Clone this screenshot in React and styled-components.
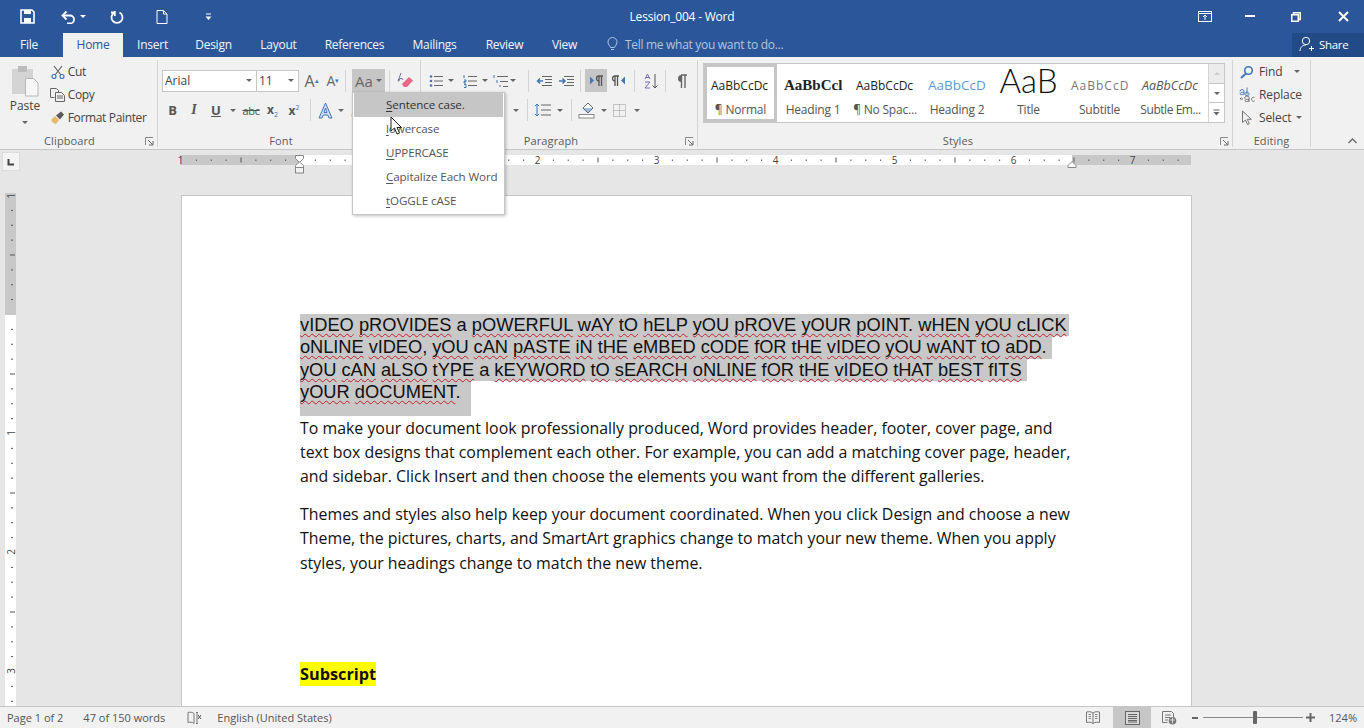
import React from "react";
import styled, { createGlobalStyle } from "styled-components";

const Global = createGlobalStyle`
  html, body { margin: 0; padding: 0; height: 100%; overflow: hidden; background: #e6e6e6; }
  #root { height: 100%; }
  * { box-sizing: border-box; }
`;
const UI = `"Open Sans", "Noto Sans", sans-serif`;

const Shell = styled.div`
  position: relative; width: 1364px; height: 728px; display: flex; flex-direction: column;
  overflow: hidden; font-family: ${UI}; color: #444;
`;
const TitleBar = styled.header`
  height: 33px; background: #2b579a; display: grid; grid-template-columns: 1fr auto 1fr; align-items: center; color: #fff;
`;
const Quick = styled.div`display: flex; align-items: center; padding-left: 18px;`;
const QuickBtn = styled.span`
  display: flex; justify-content: center; align-items: center; width: ${p => p.$w}px; margin-left: ${p => p.$ml || 0}px; height: 28px;
`;
const DocTitle = styled.div`font-size: 12px; letter-spacing: -0.2px;`;
const WinCtl = styled.div`display: flex; justify-content: flex-end; align-items: center;`;
const WinBtn = styled.span`display: flex; justify-content: center; align-items: center; width: ${p => p.$w}px; height: 28px;`;

const TabBar = styled.nav`height: 24px; background: #2b579a; display: flex; align-items: stretch; color: #f2f5fa; font-size: 12px;`;
const Tab = styled.span`
  display: flex; align-items: center; justify-content: center; width: ${p => p.$w}px;
  background: ${p => (p.$on ? "#f1f1f1" : "transparent")}; color: ${p => (p.$on ? "#2b579a" : "inherit")};
  letter-spacing: -0.25px; padding: 0 ${p => p.$pr || 0}px 2px 0;
`;
const TellMe = styled.span`display: flex; align-items: center; gap: 7px; margin-left: 15px; padding-bottom: 2px; color: #b3c4df; font-size: 12px; letter-spacing: -0.3px;`;
const Share = styled.span`
  margin-left: auto; width: 72px; background: #224a87; display: flex; align-items: center; gap: 4px; padding: 0 0 2px 7px; color: #fff; letter-spacing: -0.3px; font-size: 11.5px;
`;

const Ribbon = styled.section`height: 93px; background: #f1f1f1; display: flex; border-bottom: 1px solid #c6c6c6;`;
const Group = styled.div`
  width: ${p => p.$w}px; flex: none; display: flex; flex-direction: column; position: relative;
  border-right: 1px solid #d4d4d4; margin-bottom: 2px; margin-top: 3px;
`;
const GroupBody = styled.div`flex: 1; display: ${p => (p.$row ? "flex" : "block")}; min-height: 0;`;
const GroupLabel = styled.div`
  height: 19px; flex: none; display: flex; align-items: center; justify-content: center; font-size: 11px;
  color: #5c5c5c; padding-right: ${p => p.$pr || 0}px; padding-top: 6px; letter-spacing: .1px;
`;
const Launcher = styled.span`position: absolute; right: 3px; bottom: 1px; display: flex;`;

const PasteCol = styled.div`width: 50px; flex: none; display: flex; flex-direction: column; align-items: center; padding-top: 5px; font-size: 12px; color: #444;`;
const PasteLabel = styled.span`margin-top: 1px; line-height: 16px;`;
const PasteCaret = styled.span`
  display: block; margin-top: 7px; width: 0; height: 0; border-left: 3px solid transparent; border-right: 3px solid transparent; border-top: 3px solid #666;
`;
const ClipList = styled.div`display: flex; flex-direction: column;`;
const ClipItem = styled.div`
  height: 23px; flex: none; display: flex; align-items: center; font-size: 12px; color: #444; letter-spacing: -0.35px; white-space: nowrap;
`;
const ClipIcon = styled.span`width: 15px; flex: none; display: flex; justify-content: center;`;

const Row = styled.div`
  display: flex; align-items: center; height: ${p => p.$h || 24}px; padding-left: ${p => p.$pl || 0}px; margin-top: ${p => p.$mt || 0}px;
`;
const Combo = styled.div`
  width: ${p => p.$w}px; height: 22px; background: #fff; border: 1px solid #c6c6c6; margin-left: ${p => p.$ml || 0}px;
  display: flex; align-items: center; justify-content: space-between; padding: 0 4px 0 2px; font-size: 12px; color: #444;
`;
const Btn = styled.span`
  display: flex; align-items: center; justify-content: center; flex: none; width: ${p => p.$w}px; height: 23px;
  margin-left: ${p => p.$ml || 0}px; background: ${p => (p.$on ? "#c6c6c6" : "transparent")}; color: #666;
  font-size: ${p => p.$fs || 12}px;
  sup { font-size: 7px; color: #3f77b8; }
`;
const Bold = styled.span`font-weight: 700; font-size: 13px; color: #555;`;
const Ital = styled.span`font-family: "Liberation Serif", serif; font-style: italic; font-weight: 700; font-size: 14px; color: #555;`;
const Under = styled.span`font-weight: 700; font-size: 13px; color: #555; text-decoration: underline;`;
const Strike = styled.span`font-size: 11px; color: #555; text-decoration: line-through; letter-spacing: -0.3px;`;
const Sub = styled.span`font-weight: 700; font-size: 12px; color: #555; sub, sup { font-size: 7px; color: #3f77b8; font-weight: 400; }`;
const AaText = styled.span`font-size: 15px; color: #666; margin-right: 3px;`;
const Sep = styled.span`width: 1px; height: ${p => p.$h || 22}px; background: #d4d4d4; flex: none; margin-left: ${p => p.$ml || 0}px;`;
const Caret = styled.span`
  width: 0; height: 0; border-left: 3px solid transparent; border-right: 3px solid transparent; border-top: 3px solid ${p => p.$color || "#666"}; display: block;
`;
const CaretUp = styled(Caret)`transform: rotate(180deg);`;
const CaretBtn = styled.span`display: flex; justify-content: center; align-items: center; flex: none; width: ${p => p.$w || 12}px; margin-left: ${p => p.$ml || 0}px;`;

const Gallery = styled.div`
  margin: 3px 0 0 5px; height: 60px; width: 522px; display: flex; background: #fff; border: 1px solid #c6c6c6;
`;
const StyleItem = styled.div`
  width: ${p => p.$w || 72}px; flex: none; display: flex; flex-direction: column; align-items: center; overflow: hidden;
  border: 3px solid ${p => (p.$on ? "#c6c6c6" : "transparent")};
`;
const Preview = styled.div`
  height: 35px; width: 100%; overflow: hidden; white-space: nowrap; display: flex; align-items: center; justify-content: ${p => p.$center ? "center" : "flex-start"};
  padding-left: ${p => p.$center ? 0 : 4}px; padding-bottom: ${p => p.$pb || 0}px; padding-top: ${p => p.$center ? 0 : 1}px;
  font-family: ${p => p.$font || UI}; font-size: ${p => p.$fs || 12}px; font-weight: ${p => p.$weight || 400};
  font-style: ${p => p.$italic ? "italic" : "normal"}; color: ${p => p.$color || "#222"}; letter-spacing: ${p => p.$ls || 0}px;
`;
const StyleName = styled.div`font-size: 12px; color: #555; white-space: nowrap; letter-spacing: ${p => p.$ls ?? -0.2}px; line-height: 16px;`;
const GalleryScroll = styled.div`margin-left: auto; width: 16px; flex: none; display: flex; flex-direction: column; border-left: 1px solid #d4d4d4;`;
const ScrollCell = styled.div`
  flex: 1; display: flex; align-items: center; justify-content: center; background: ${p => p.$dim ? "#ececec" : "#fff"};
  border-bottom: ${p => p.$last ? "none" : "1px solid #c6c6c6"};
`;
const EditList = styled.div`display: flex; flex-direction: column; padding: 0 0 0 5px; `;
const EditItem = styled.div`height: 23px; flex: none; display: flex; align-items: center; font-size: 12px; color: #444; gap: 4px; letter-spacing: -0.1px;`;
const EditIcon = styled.span`width: 17px; flex: none; display: flex; justify-content: center;`;
const Collapse = styled.span`margin: auto 7px 5px auto; display: flex;`;

const Workspace = styled.main`flex: 1; min-height: 0; background: #e6e6e6; display: flex; flex-direction: column; overflow: hidden;`;
const RulerRow = styled.div`height: 43px; flex: none; display: flex; align-items: flex-start;`;
const TabStop = styled.span`
  width: 18px; height: 19px; margin: 2px 0 0 2px; background: #f4f4f4; border: 1px solid #dcdcdc; display: flex; align-items: center; justify-content: center; flex: none;
`;
const HRuler = styled.svg`display: block; margin: 5px 0 0 160px; flex: none; overflow: visible;`;
const WorkBody = styled.div`flex: 1; min-height: 0; display: flex;`;
const VRuler = styled.svg`display: block; margin-left: 5px; flex: none; overflow: visible;`;
const Page = styled.article`
  margin: 2px 0 0 165px; width: 1011px; background: #fff; border: 1px solid #c6c6c6; border-bottom: 0; padding: 118px 0 0 118px; overflow: hidden; flex: none;
`;
const SelPara = styled.div`font-family: "Liberation Sans", sans-serif; font-size: 18.3px; color: #111;`;
const SelLine = styled.div`
  background: #c8c8c8; width: ${p => p.$w}px; height: ${p => p.$tail ? 34.4 : 22.4}px; line-height: 22.4px; white-space: nowrap;
  letter-spacing: ${p => p.$ls || 0}px;
`;
const Wavy = styled.span`
  text-decoration: underline wavy #c02030 1px; text-underline-offset: 2px; text-decoration-skip-ink: none;
`;
const BodyPara = styled.p`margin: 0 0 13px; font-size: 15.9px; line-height: 24.4px; color: #111; white-space: nowrap;`;
const Heading = styled.div`margin-top: 87px;`;
const Mark = styled.span`background: #ffff00; font-size: 16.3px; font-weight: 700; color: #111; line-height: 24px; display: inline-block;`;

const Status = styled.footer`
  height: 22px; flex: none; background: #f1f1f1; border-top: 1px solid #c6c6c6; display: flex; align-items: center; font-size: 11px; color: #555; position: relative;
`;
const StatusText = styled.span`margin-left: ${p => p.$ml}px; margin-right: ${p => p.$mr || 0}px; white-space: nowrap;`;
const StatusIcon = styled.span`margin-left: ${p => p.$ml || 0}px; display: flex; justify-content: center; align-items: center; width: ${p => p.$w}px; height: 21px; background: ${p => p.$on ? "#c6c6c6" : "transparent"};`;
const StatusRight = styled.div`margin-left: auto; display: flex; align-items: center;`;
const Slider = styled.span`
  position: relative; width: 100px; height: 1px; background: #888; margin: 0 3px 0 4px; display: block;
`;
const Thumb = styled.span`position: absolute; left: 50px; top: -6px; width: 4px; height: 13px; background: #666; border-radius: 1px;`;

const Menu = styled.div`
  position: absolute; left: 352px; top: 92px; width: 153px; height: 123px; background: #fff; border: 1px solid #c6c6c6;
  box-shadow: 1px 1px 3px rgba(0,0,0,.25); padding: 0 1px 1px; z-index: 5;
`;
const MenuItem = styled.div`
  height: 24px; display: flex; align-items: center; padding: 0 0 1px 32px; font-size: 11.6px; letter-spacing: -0.08px;
  background: ${p => p.$on ? "#c6c6c6" : "transparent"}; color: ${p => p.$on ? "#333" : "#555"};
  u { text-underline-offset: 2px; }
`;
const Pointer = styled.svg`position: absolute; left: 390px; top: 116px; z-index: 6;`;

const S = ({ w = 16, h = 16, children }) => (
  <svg width={w} height={h} viewBox={`0 0 ${w} ${h}`} fill="none">{children}</svg>
);

const Words = ({ text }) => {
  const parts = text.split(" ");
  return parts.map((w, i) => (
    <React.Fragment key={i}>
      {w === "a" ? w : <Wavy>{w.replace(/[.,]$/, "")}</Wavy>}
      {w !== "a" && /[.,]$/.test(w) ? w.slice(-1) : ""}
      {i < parts.length - 1 ? " " : ""}
    </React.Fragment>
  ));
};

const Launch = () => (
  <S w={9} h={9}><path d="M.5 8V.5H8" stroke="#888" /><path d="M3 3l4.500 4.500M4 8h4V4" stroke="#666" /></S>
);

const inch = 119, step = inch / 8;
const hx = v => 120 + v * step;
function HorizontalRuler() {
  const ticks = [];
  for (let i = -7; i < 60; i++) {
    if (((i % 8) + 8) % 8 === 0) continue;
    const half = ((i % 8) + 8) % 8 === 4;
    ticks.push(<rect key={i} x={hx(i)} y={half ? 2.5 : 4.5} width="1" height={half ? 5 : 1.5} fill="#555" />);
  }
  return (
    <HRuler width="1011" height="30">
      <rect x="0" y="0" width="1011" height="10" fill="#c8c8c8" />
      <rect x="120" y="0" width="772" height="10" fill="#fff" />
      {ticks}
      {[[-1, 1], [2, 2], [3, 3], [4, 4], [5, 5], [6, 6], [7, 7]].map(([n, l]) => (
        <text key={n} x={119.500 + n * inch} y="9" fontSize="10" fill="#444" textAnchor="middle" fontFamily="Open Sans">{l}</text>
      ))}
      <path d="M115.500 0.500h8v3l-4 4-4-4z" fill="#fff" stroke="#888" />
      <path d="M115.500 12.500v-2l4-3.500 4 3.500v2z" fill="#fff" stroke="#888" />
      <rect x="115.500" y="12.500" width="8" height="5.500" fill="#f1f1f1" stroke="#888" />
      <path d="M888 12.500v-2l4-4 4 4v2z" fill="#fff" stroke="#888" />
    </HRuler>
  );
}
function VerticalRuler() {
  const ticks = [];
  for (let i = -7; i < 31; i++) {
    if (((i % 8) + 8) % 8 === 0) continue;
    const half = ((i % 8) + 8) % 8 === 4;
    const y = 121 + i * step;
    ticks.push(<rect key={i} x={half ? 5 : 6} y={y} width={half ? 5 : 2} height="1" fill="#555" />);
  }
  return (
    <VRuler width="11" height="513">
      <rect width="11" height="513" fill="#fff" />
      <rect width="11" height="122" fill="#c8c8c8" />
      {ticks}
      {[[3, 1], [240, 1], [359, 2], [478, 3]].map(([y, l]) => (
        <text key={y} x="0" y="0" fontSize="10" fill="#444" textAnchor="middle" fontFamily="Open Sans"
          transform={`translate(10 ${y}) rotate(-90)`}>{l}</text>
      ))}
    </VRuler>
  );
}

const lines3 = x => [0, 1, 2].map(i => <path key={i} d={`M${x} ${3.5 + i * 5}h10`} stroke="#666" />);

export default function App() {
  return (
    <Shell>
      <Global />
      <TitleBar>
        <Quick>
          <QuickBtn $w={18}>
            <S w={15} h={15}><path d="M1 1h11l2 2v11H1z" stroke="#fff" strokeWidth="1.600" /><rect x="4" y="1" width="7" height="4" fill="#fff" /><rect x="4" y="9" width="7" height="5" fill="#fff" /></S>
          </QuickBtn>
          <QuickBtn $w={18} $ml={24}>
            <S w={16} h={14}><path d="M5.500 1.500L1.500 5.500l4 4" stroke="#fff" strokeWidth="1.800" /><path d="M2 5.500h7a4 4 0 0 1 0 8H6" stroke="#fff" strokeWidth="1.800" /></S>
          </QuickBtn>
          <QuickBtn $w={10}><Caret $color="#fff" /></QuickBtn>
          <QuickBtn $w={14} $ml={22}>
            <S w={14} h={14}><path d="M4.500 2.500a5.500 5.500 0 1 0 5 0" stroke="#fff" strokeWidth="1.800" /><path d="M4.800 1v5M1 2.500h4" stroke="#fff" strokeWidth="1.800" /></S>
          </QuickBtn>
          <QuickBtn $w={14} $ml={31}>
            <S w={12} h={14}><path d="M1 .5h6.500L11 4v9.500H1zM7.500.5V4H11" stroke="#fff" /></S>
          </QuickBtn>
          <QuickBtn $w={10} $ml={34}>
            <S w={7} h={8}><path d="M1 1h5" stroke="#fff" /><path d="M.5 3.500h6L3.500 7z" fill="#fff" /></S>
          </QuickBtn>
        </Quick>
        <DocTitle>Lession_004 - Word</DocTitle>
        <WinCtl>
          <WinBtn $w={50}>
            <S w={14} h={11}><rect x=".5" y=".5" width="13" height="10" stroke="#fff" /><path d="M.5 2.500h13" stroke="#fff" /><path d="M7 9V4M5 6l2-2 2 2" stroke="#fff" /></S>
          </WinBtn>
          <WinBtn $w={40}><S w={10} h={3}><rect width="10" height="2" fill="#fff" /></S></WinBtn>
          <WinBtn $w={52}>
            <S w={10} h={10}><rect x=".75" y="2.750" width="6.500" height="6.500" stroke="#fff" strokeWidth="1.500" /><path d="M2.500 2.500V.75h6.750V7.500H7.500" stroke="#fff" strokeWidth="1.500" /></S>
          </WinBtn>
          <WinBtn $w={42}><S w={11} h={11}><path d="M1 1l9 9M10 1l-9 9" stroke="#fff" strokeWidth="2" /></S></WinBtn>
        </WinCtl>
      </TitleBar>

      <TabBar>
        <Tab $w={63} $pr={5}>File</Tab>
        <Tab $w={60} $on>Home</Tab>
        <Tab $w={59}>Insert</Tab>
        <Tab $w={63}>Design</Tab>
        <Tab $w={67}>Layout</Tab>
        <Tab $w={85}>References</Tab>
        <Tab $w={75}>Mailings</Tab>
        <Tab $w={65}>Review</Tab>
        <Tab $w={55}>View</Tab>
        <TellMe>
          <S w={11} h={14}><path d="M3.500 10.500C3 8.500 1 8 1 5a4.500 4.500 0 0 1 9 0c0 3-2 3.500-2.500 5.500zM4 12.500h3" stroke="#b3c4df" /></S>
          Tell me what you want to do...
        </TellMe>
        <Share>
          <S w={16} h={16}><circle cx="7" cy="5" r="3.700" stroke="#fff" /><path d="M1 15c0-3.500 2.500-6 6-6M10 12.500h5M12.500 10v5" stroke="#fff" /></S>
          Share
        </Share>
      </TabBar>

      <Ribbon>
        <Group $w={158}>
          <GroupBody $row>
            <PasteCol>
              <S w={28} h={32}>
                <rect x="1" y="4" width="21" height="25" fill="#d4d4d4" />
                <rect x="7" y="1" width="9" height="6" fill="#bcbcbc" />
                <path d="M14.500 13.500h8l4.500 4.500v13H14.500z" fill="#f7f7f7" stroke="#b5b5b5" />
              </S>
              <PasteLabel>Paste</PasteLabel>
              <PasteCaret />
            </PasteCol>
            <ClipList>
              <ClipItem>
                <ClipIcon>
                  <S w={14} h={14}><path d="M3 1l7 9M11 1L4 10" stroke="#666" strokeWidth="1.200" /><circle cx="3" cy="11.500" r="2" stroke="#3f77b8" strokeWidth="1.200" /><circle cx="11" cy="11.500" r="2" stroke="#3f77b8" strokeWidth="1.200" /></S>
                </ClipIcon>&nbsp;Cut
              </ClipItem>
              <ClipItem>
                <ClipIcon>
                  <S w={15} h={14}><path d="M.5.5h6l2 2v2M.5.500v9h4" stroke="#666" /><path d="M5.500 4.500h6l3 3v6h-9zM7 8h6M7 10h6" stroke="#666" /></S>
                </ClipIcon>&nbsp;Copy
              </ClipItem>
              <ClipItem>
                <ClipIcon>
                  <S w={15} h={14}><path d="M1 9l4-4 4 4-3 4c-2-.5-4-2-5-4z" fill="#e8b968" /><path d="M6 4.500l4 4 4-5-3-3z" fill="#5a5a5a" /></S>
                </ClipIcon>&nbsp;Format Painter
              </ClipItem>
            </ClipList>
          </GroupBody>
          <GroupLabel $pr={18}>Clipboard</GroupLabel>
          <Launcher><Launch /></Launcher>
        </Group>

        <Group $w={263}>
          <GroupBody>
            <Row $h={23} $pl={4} $mt={9}>
              <Combo $w={95}>Arial<Caret /></Combo>
              <Combo $w={43} $ml={-1}>11<Caret /></Combo>
              <Btn $w={25} $fs={16}>A<sup>▴</sup></Btn>
              <Btn $w={18} $fs={14}>A<sup>▾</sup></Btn>
              <Sep $ml={3} />
              <Btn $w={33} $ml={6} $on><AaText>Aa</AaText><Caret /></Btn>
              <Sep $ml={4} />
              <Btn $w={30}>
                <S w={18} h={17}><path d="M5 1L2 9h1l.8-2.500h2.400L7 8" stroke="#7a6bb5" /><path d="M6 12l7-7 4 3.500-6 6.500H8z" fill="#e8688a" /></S>
              </Btn>
            </Row>
            <Row $h={24} $pl={4} $mt={6}>
              <Btn $w={21}><Bold>B</Bold></Btn>
              <Btn $w={22}><Ital>I</Ital></Btn>
              <Btn $w={22}><Under>U</Under></Btn>
              <CaretBtn $w={12}><Caret /></CaretBtn>
              <Btn $w={22} $ml={1}><Strike>abc</Strike></Btn>
              <Btn $w={21}><Sub>x<sub>2</sub></Sub></Btn>
              <Btn $w={22}><Sub>x<sup>2</sup></Sub></Btn>
              <Sep $ml={5} />
              <Btn $w={24} $ml={2}>
                <S w={17} h={17}><path d="M2 16L8.500 1 15 16h-3l-1.200-3H6.200L5 16zM7 10.500h3L8.500 6z" fill="#cfe0f3" stroke="#3f77b8" /></S>
              </Btn>
              <CaretBtn $w={8}><Caret /></CaretBtn>
              <Btn $w={10} $ml={1}><S w={6} h={16}><rect x="3" y="12" width="3" height="3" fill="#e4e84a" /></S></Btn>
            </Row>
          </GroupBody>
          <GroupLabel $pr={16}>Font</GroupLabel>
        </Group>

        <Group $w={277}>
          <GroupBody>
            <Row $h={23} $pl={6} $mt={9}>
              <Btn $w={18}>
                <S w={14} h={14}><circle cx="2" cy="2.500" r="1.300" fill="#3f77b8" /><circle cx="2" cy="7" r="1.300" fill="#3f77b8" /><circle cx="2" cy="11.500" r="1.300" fill="#3f77b8" /><path d="M5 2.500h9M5 7h9M5 11.500h9" stroke="#666" /></S>
              </Btn>
              <CaretBtn $w={12}><Caret /></CaretBtn>
              <Btn $w={18} $ml={4}>
                <S w={14} h={14}><path d="M1 1v3M1 6h2v1.500H1V9h2M1 10.500h2v3H1" stroke="#3f77b8" /><path d="M5 2.500h9M5 7h9M5 11.500h9" stroke="#666" /></S>
              </Btn>
              <CaretBtn $w={12}><Caret /></CaretBtn>
              <Btn $w={18} $ml={1}>
                <S w={16} h={14}><path d="M1 1v3M4 6v3M7 11v2" stroke="#3f77b8" /><path d="M4 2.500h11M7 7.500h8M10 12.500h5" stroke="#666" /></S>
              </Btn>
              <CaretBtn $w={12} $ml={-3}><Caret /></CaretBtn>
              <Sep $ml={9} />
              <Btn $w={18} $ml={6}>
                <S w={16} h={12}><path d="M6 1.500h10M9 4.500h7M9 7.500h7M6 10.500h10" stroke="#666" /><path d="M7 6H2M4 3.500L1.500 6 4 8.500" stroke="#3f77b8" strokeWidth="1.500" /></S>
              </Btn>
              <Btn $w={18} $ml={4}>
                <S w={16} h={12}><path d="M6 1.500h10M9 4.500h7M9 7.500h7M6 10.500h10" stroke="#666" /><path d="M1 6h6M4.500 3.500L7 6 4.500 8.500" stroke="#3f77b8" strokeWidth="1.500" /></S>
              </Btn>
              <Sep $ml={5} />
              <Btn $w={22} $ml={4} $on>
                <S w={13} h={11}><path d="M0 1.500l4 4-4 4z" fill="#3f77b8" /><path d="M8 1h5M9 1v10M11.500 1v10M9 1a2.500 2.500 0 0 0 0 5" stroke="#555" strokeWidth="1.300" /></S>
              </Btn>
              <Btn $w={22}>
                <S w={13} h={11}><path d="M13 1.500l-4 4 4 4z" fill="#3f77b8" /><path d="M2 1h5M3 1v10M5.500 1v10M3 1a2.500 2.500 0 0 0 0 5" stroke="#555" strokeWidth="1.300" /></S>
              </Btn>
              <Sep $ml={5} />
              <Btn $w={18} $ml={7}>
                <S w={15} h={16}><path d="M1 6l2.500-5L6 6M1.800 4.500h3.400" stroke="#7a6bb5" /><path d="M1 9h5L1 15h5" stroke="#7a6bb5" /><path d="M11 1v14M8.500 12.500L11 15l2.500-2.500" stroke="#555" /></S>
              </Btn>
              <Sep $ml={5} />
              <Btn $w={22} $ml={4}>
                <S w={11} h={14}><path d="M5 1h6M5.500 1v13M9 1v13" stroke="#666" strokeWidth="1.400" /><path d="M5.500 1a3.500 3.500 0 0 0 0 7z" fill="#666" /></S>
              </Btn>
            </Row>
            <Row $h={24} $pl={9} $mt={6}>
              <Btn $w={20}><S w={14} h={16}>{lines3(2)}</S></Btn>
              <Btn $w={20}><S w={14} h={16}>{lines3(2)}</S></Btn>
              <Btn $w={20}><S w={14} h={16}>{lines3(2)}</S></Btn>
              <Btn $w={20}><S w={14} h={16}>{lines3(2)}</S></Btn>
              <CaretBtn $w={12}><Caret /></CaretBtn>
              <Sep $ml={5} />
              <Btn $w={20} $ml={4}>
                <S w={17} h={16}><path d="M3 2v12M1 4l2-2 2 2M1 12l2 2 2-2" stroke="#3f77b8" /><path d="M7 3h10M7 8h10M7 13h10" stroke="#666" /></S>
              </Btn>
              <CaretBtn $w={12} $ml={2}><Caret /></CaretBtn>
              <Sep $ml={5} />
              <Btn $w={24} $ml={3}>
                <S w={18} h={17}><path d="M5 6l5-5 5 5-5 5z" fill="#fff" stroke="#666" /><path d="M4 6h11l-5 5z" fill="#3f77b8" opacity=".5" /><rect x="1" y="12.500" width="15" height="3.500" fill="#fff" stroke="#888" /></S>
              </Btn>
              <CaretBtn $w={10}><Caret /></CaretBtn>
              <Btn $w={22} $ml={-1}>
                <S w={13} h={13}><rect x=".5" y=".5" width="12" height="12" stroke="#999" strokeDasharray="1 1" /><path d="M.5 6.500h12M6.500.500v12" stroke="#999" strokeDasharray="1 1" /></S>
              </Btn>
              <CaretBtn $w={12} $ml={1}><Caret /></CaretBtn>
            </Row>
          </GroupBody>
          <GroupLabel $pr={16}>Paragraph</GroupLabel>
          <Launcher><Launch /></Launcher>
        </Group>

        <Group $w={535}>
          <GroupBody>
            <Gallery>
              <StyleItem $on $w={73}>
                <Preview>AaBbCcDc</Preview>
                <StyleName>¶ Normal</StyleName>
              </StyleItem>
              <StyleItem><Preview $font={`"Liberation Serif", serif`} $weight={700} $fs={15}>AaBbCcl</Preview><StyleName>Heading 1</StyleName></StyleItem>
              <StyleItem><Preview>AaBbCcDc</Preview><StyleName>¶ No Spac...</StyleName></StyleItem>
              <StyleItem><Preview $fs={13.500} $color="#5b9bd5">AaBbCcD</Preview><StyleName>Heading 2</StyleName></StyleItem>
              <StyleItem $w={71}><Preview $center $font={`Lato, sans-serif`} $weight={300} $fs={33} $color="#111" $pb={9}>AaB</Preview><StyleName>Title</StyleName></StyleItem>
              <StyleItem $w={71}><Preview $fs={12} $color="#777" $ls={1}>AaBbCcD</Preview><StyleName>Subtitle</StyleName></StyleItem>
              <StyleItem $w={71}><Preview $italic $color="#555" $fs={12.500}>AaBbCcDc</Preview><StyleName $ls={-0.45}>Subtle Em...</StyleName></StyleItem>
              <GalleryScroll>
                <ScrollCell $dim><CaretUp $color="#ccc" /></ScrollCell>
                <ScrollCell><Caret /></ScrollCell>
                <ScrollCell $last><S w={7} h={7}><path d="M.5 1h6" stroke="#666" /><path d="M.5 3h6L3.500 6.500z" fill="#666" /></S></ScrollCell>
              </GalleryScroll>
            </Gallery>
          </GroupBody>
          <GroupLabel $pr={14}>Styles</GroupLabel>
          <Launcher><Launch /></Launcher>
        </Group>

        <Group $w={78}>
          <GroupBody>
            <EditList>
              <EditItem>
                <EditIcon><S w={14} h={14}><circle cx="8.500" cy="5.500" r="3.800" stroke="#3f77b8" strokeWidth="1.600" /><path d="M6 8.500L1 13" stroke="#3f77b8" strokeWidth="2" /></S></EditIcon>
                Find<CaretBtn $ml={4} $w={12}><Caret /></CaretBtn>
              </EditItem>
              <EditItem>
                <EditIcon><S w={16} h={16}><path d="M1 4.500a2 2 0 1 1 4 0v3M5 5.500c-2-.5-4 0-4 1.300s3 1.200 4 0M8 .500v7M8 5a2 2 0 1 0 .1 0" stroke="#3f77b8" strokeWidth=".9" /><path d="M6 12a2.200 2.200 0 1 1 4 0v3M10 12.500c-2-.5-4 0-4 1.200s3 1 4 0M15.500 10.500a2 2 0 1 0 0 3.500M1 12h3M1 12l1.500-1.500" stroke="#666" strokeWidth=".9" /></S></EditIcon>
                Replace
              </EditItem>
              <EditItem>
                <EditIcon><S w={12} h={16}><path d="M1.500 1v11.500l3-2.500 2 4.500 1.800-.8-2-4.400h4z" stroke="#777" /></S></EditIcon>
                Select<Caret />
              </EditItem>
            </EditList>
          </GroupBody>
          <GroupLabel>Editing</GroupLabel>
        </Group>

        <Collapse><S w={9} h={6}><path d="M.5 5L4.500 1l4 4" stroke="#666" strokeWidth="1.300" /></S></Collapse>
      </Ribbon>

      <Workspace>
        <RulerRow>
          <TabStop><S w={8} h={8}><path d="M1.500 1v5.500H7" stroke="#444" strokeWidth="2" /></S></TabStop>
          <HorizontalRuler />
        </RulerRow>
        <WorkBody>
          <VerticalRuler />
          <Page>
            <SelPara>
              <SelLine $w={769}><Words text="vIDEO pROVIDES a pOWERFUL wAY tO hELP yOU pROVE yOUR pOINT. wHEN yOU cLICK" /></SelLine>
              <SelLine $w={752} $ls={-0.065}><Words text="oNLINE vIDEO, yOU cAN pASTE iN tHE eMBED cODE fOR tHE vIDEO yOU wANT tO aDD." /></SelLine>
              <SelLine $w={727} $ls={-0.04}><Words text="yOU cAN aLSO tYPE a kEYWORD tO sEARCH oNLINE fOR tHE vIDEO tHAT bEST fITS" /></SelLine>
              <SelLine $w={171} $tail><Words text="yOUR dOCUMENT." /></SelLine>
            </SelPara>
            <BodyPara>
              To make your document look professionally produced, Word provides header, footer, cover page, and<br />
              text box designs that complement each other. For example, you can add a matching cover page, header,<br />
              and sidebar. Click Insert and then choose the elements you want from the different galleries.
            </BodyPara>
            <BodyPara>
              Themes and styles also help keep your document coordinated. When you click Design and choose a new<br />
              Theme, the pictures, charts, and SmartArt graphics change to match your new theme. When you apply<br />
              styles, your headings change to match the new theme.
            </BodyPara>
            <Heading><Mark>Subscript</Mark></Heading>
          </Page>
        </WorkBody>
      </Workspace>

      <Status>
        <StatusText $ml={7}>Page 1 of 2</StatusText>
        <StatusText $ml={20}>47 of 150 words</StatusText>
        <StatusIcon $ml={21} $w={16}>
          <S w={15} h={14}><path d="M7 2.500C5.500 1 3 1 1 1.500v10c2-.5 4.500-.5 6 1M7 2.500v10" stroke="#777" /><path d="M10 2v10M9 1.500h2M9 12.500h2" stroke="#777" /><path d="M11 4l3 4M14 4l-3 4" stroke="#555" /></S>
        </StatusIcon>
        <StatusText $ml={15}>English (United States)</StatusText>
        <StatusRight>
          <StatusIcon $w={16}>
            <S w={14} h={13}><path d="M7 2C5 .5 3 .5 .5 1v10.500c2.500-.5 4.500-.5 6.500 1 2-1.500 4-1.500 6.500-1V1C11 .5 9 .5 7 2zM7 2v10.500" stroke="#777" /><path d="M2.500 3.500h2.500M2.500 5.500h2.500M2.500 7.500h2.500M9 3.500h2.500M9 5.500h2.500M9 7.500h2.500" stroke="#888" /></S>
          </StatusIcon>
          <StatusIcon $w={38} $ml={12} $on>
            <S w={15} h={14}><rect x=".5" y=".5" width="14" height="13" stroke="#666" fill="#d8d8d8" /><path d="M3 3.500h9M3 5.500h9M3 7.500h9M3 9.500h9M3 11h9" stroke="#666" /></S>
          </StatusIcon>
          <StatusIcon $w={18} $ml={9}>
            <S w={15} h={14}><path d="M.5.500h9l2 2v4M.5.500v11h5" stroke="#777" /><path d="M3 4h6M3 6.500h5M3 9h3" stroke="#777" /><circle cx="10.500" cy="9.800" r="3.800" fill="#777" /><path d="M8 9h5M10.500 6.500v6" stroke="#fff" strokeWidth=".7" /></S>
          </StatusIcon>
          <StatusIcon $w={9} $ml={12}><S w={6} h={2}><rect width="6" height="2" fill="#666" /></S></StatusIcon>
          <Slider><Thumb /></Slider>
          <StatusIcon $w={9}><S w={9} h={9}><path d="M0 4.500h9M4.500 0v9" stroke="#666" strokeWidth="2" /></S></StatusIcon>
          <StatusText $ml={14} $mr={7}>124%</StatusText>
        </StatusRight>
      </Status>

      <Menu>
        <MenuItem $on><span><u>S</u>entence case.</span></MenuItem>
        <MenuItem><span><u>l</u>owercase</span></MenuItem>
        <MenuItem><span><u>U</u>PPERCASE</span></MenuItem>
        <MenuItem><span><u>C</u>apitalize Each Word</span></MenuItem>
        <MenuItem><span><u>t</u>OGGLE cASE</span></MenuItem>
      </Menu>
      <Pointer width="14" height="20"><path d="M1 1v14l3.500-3 2.500 6 2.500-1-2.500-5.500h4.500z" fill="#fff" stroke="#222" /></Pointer>
    </Shell>
  );
}
